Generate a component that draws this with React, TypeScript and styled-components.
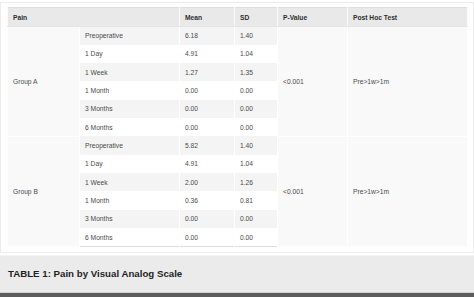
import React from 'react';
import styled, { createGlobalStyle } from 'styled-components';

const GlobalStyle = createGlobalStyle`
  html, body {
    margin: 0;
    padding: 0;
    background: #ffffff;
  }
  body {
    font-family: "Liberation Sans", Arial, sans-serif;
    width: 474px;
    height: 297px;
    overflow: hidden;
  }
`;

const Page = styled.div`
  width: 474px;
  height: 297px;
  display: flex;
  flex-direction: column;
`;

const TableFrame = styled.div`
  margin-top: 2px;
  border: 1px solid #ececec;
  padding: 4px 7px 5px 6px;
  background: #fff;
`;

const Table = styled.table`
  width: 460px;
  border-collapse: collapse;
  table-layout: fixed;
  border: 1px solid #dedede;
  font-size: 6.7px;
  color: #4a4a4a;
`;

const HeadCell = styled.th`
  background: #e9e9e9;
  color: #2e2e2e;
  font-weight: bold;
  text-align: left;
  padding: 0 5px;
  height: 18px;
  border-left: 1px solid #fbfbfb;
  border-right: 1px solid #fbfbfb;
  border-bottom: 1px solid #e4e4e4;
`;

const Row = styled.tr<{ $striped: boolean }>`
  height: 18.33px;
  background: ${(p) => (p.$striped ? '#f4f4f4' : '#ffffff')};
`;

const Cell = styled.td`
  padding: 0 5px;
  vertical-align: middle;
  white-space: nowrap;
  border-left: 1px solid #ffffff;
  border-right: 1px solid #ffffff;
`;

const SpanCell = styled(Cell)`
  background: #f9f9f9;
  border-bottom: 1px solid #ffffff;
`;

const CaptionBand = styled.div`
  margin-top: 2px;
  flex: 1;
  background: #ebebeb;
  border-top: 1px solid #f3f3f3;
  border-bottom: 1px solid #d4d4d4;
  display: flex;
  align-items: center;
  padding-left: 8px;
  font-size: 9.7px;
  font-weight: bold;
  color: #1f1f1f;
`;

const BottomBar = styled.div`
  height: 4px;
  background: #5c5c5c;
`;

type Group = {
  name: string;
  pValue: string;
  postHoc: string;
  rows: [string, string, string][];
};

const groups: Group[] = [
  {
    name: 'Group A',
    pValue: '<0.001',
    postHoc: 'Pre>1w>1m',
    rows: [
      ['Preoperative', '6.18', '1.40'],
      ['1 Day', '4.91', '1.04'],
      ['1 Week', '1.27', '1.35'],
      ['1 Month', '0.00', '0.00'],
      ['3 Months', '0.00', '0.00'],
      ['6 Months', '0.00', '0.00'],
    ],
  },
  {
    name: 'Group B',
    pValue: '<0.001',
    postHoc: 'Pre>1w>1m',
    rows: [
      ['Preoperative', '5.82', '1.40'],
      ['1 Day', '4.91', '1.04'],
      ['1 Week', '2.00', '1.26'],
      ['1 Month', '0.36', '0.81'],
      ['3 Months', '0.00', '0.00'],
      ['6 Months', '0.00', '0.00'],
    ],
  },
];

const App: React.FC = () => {
  return (
    <Page>
      <GlobalStyle />
      <TableFrame>
        <Table>
          <colgroup>
            <col style={{ width: 72 }} />
            <col style={{ width: 100 }} />
            <col style={{ width: 55 }} />
            <col style={{ width: 43 }} />
            <col style={{ width: 70 }} />
            <col style={{ width: 120 }} />
          </colgroup>
          <thead>
            <tr>
              <HeadCell colSpan={2}>Pain</HeadCell>
              <HeadCell>Mean</HeadCell>
              <HeadCell>SD</HeadCell>
              <HeadCell>P-Value</HeadCell>
              <HeadCell>Post Hoc Test</HeadCell>
            </tr>
          </thead>
          <tbody>
            {groups.map((g) =>
              g.rows.map(([label, mean, sd], i) => (
                <Row key={g.name + label} $striped={i % 2 === 0}>
                  {i === 0 && <SpanCell rowSpan={g.rows.length}>{g.name}</SpanCell>}
                  <Cell>{label}</Cell>
                  <Cell>{mean}</Cell>
                  <Cell>{sd}</Cell>
                  {i === 0 && <SpanCell rowSpan={g.rows.length}>{g.pValue}</SpanCell>}
                  {i === 0 && <SpanCell rowSpan={g.rows.length}>{g.postHoc}</SpanCell>}
                </Row>
              ))
            )}
          </tbody>
        </Table>
      </TableFrame>
      <CaptionBand>TABLE 1: Pain by Visual Analog Scale</CaptionBand>
      <BottomBar />
    </Page>
  );
};

export default App;
